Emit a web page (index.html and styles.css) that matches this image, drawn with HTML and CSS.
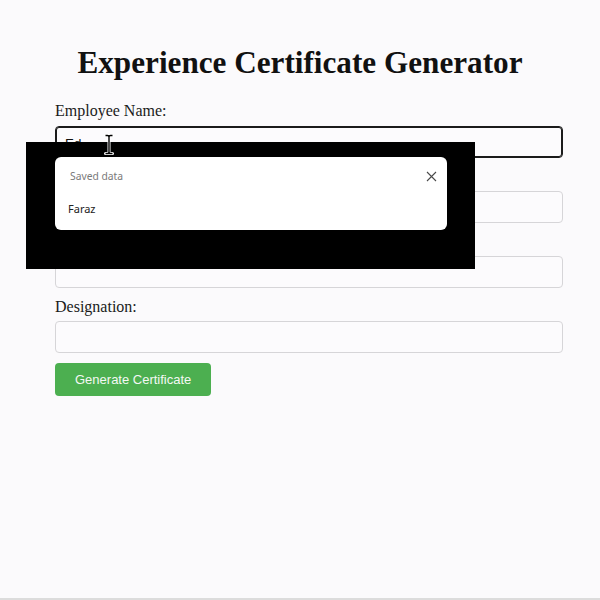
FILE: index.html
```html
<!DOCTYPE html>
<html lang="en">
<head>
<meta charset="utf-8">
<title>Experience Certificate Generator</title>
<link rel="stylesheet" href="styles.css">
</head>
<body>
<div class="page">
  <div class="container">
    <h1 class="title">Experience Certificate Generator</h1>
    <form class="form">
      <label class="label">Employee Name:</label>
      <div class="input input-focused"><span class="value">Ed</span></div>
      <label class="label"></label>
      <div class="input"></div>
      <label class="label"></label>
      <div class="input"></div>
      <label class="label">Designation:</label>
      <div class="input"></div>
      <button type="button" class="btn">Generate Certificate</button>
    </form>
  </div>

  <div class="overlay">
    <div class="popup">
      <div class="popup-head">
        <span class="popup-title">Saved data</span>
        <svg class="close" width="11" height="11" viewBox="0 0 11 11"><path d="M1 1 L10 10 M10 1 L1 10" stroke="#4a4a4a" stroke-width="1.1" fill="none"/></svg>
      </div>
      <div class="popup-item">Faraz</div>
    </div>
  </div>

  <svg class="ibeam" width="10" height="21" viewBox="0 0 10 21">
    <path d="M1.5 1.5 H3.5 Q5 1.5 5 3 Q5 1.5 6.5 1.5 H8.5 M5 3 V18 M1.5 19.5 H3.5 Q5 19.5 5 18 Q5 19.5 6.5 19.5 H8.5" stroke="#fff" stroke-width="3" fill="none" stroke-linecap="round"/>
    <path d="M1.5 1.5 H3.5 Q5 1.5 5 3 Q5 1.5 6.5 1.5 H8.5 M5 3 V18 M1.5 19.5 H3.5 Q5 19.5 5 18 Q5 19.5 6.5 19.5 H8.5" stroke="#000" stroke-width="1.4" fill="none"/>
  </svg>

  <div class="bottom-line"></div>
</div>
</body>
</html>
```

FILE: styles.css
```css
html, body {
  margin: 0;
  padding: 0;
  background: #fbfafc;
}

.page {
  position: relative;
  width: 600px;
  height: 600px;
  overflow: hidden;
  font-family: "Liberation Serif", "Times New Roman", serif;
  color: #1a1a1a;
}

.container {
  width: 490px;
  margin: 0 auto;
  padding-top: 20px;
}

.title {
  margin: 25px 0 21px;
  font-size: 31.2px;
  font-weight: bold;
  text-align: center;
  color: #111;
  line-height: 36px;
}

.form {
  display: flex;
  flex-direction: column;
  align-items: flex-start;
}

.label {
  display: block;
  height: 18px;
  font-size: 16px;
  line-height: 18px;
  margin-bottom: 5px;
}

.input {
  width: 100%;
  box-sizing: content-box;
  padding: 8px;
  height: 14px;
  border: 1px solid #d6d5d8;
  border-radius: 4px;
  background: #fcfbfd;
  margin-bottom: 10px;
  font-family: "Liberation Sans", Arial, sans-serif;
  font-size: 13.33px;
  line-height: 14px;
  color: #111;
}

.input-focused {
  border-color: #1b1b1b;
  box-shadow: inset 0 0 0 1px #1b1b1b;
  height: 12px;
  margin-top: 1px;
  padding: 10px 8px 8px;
}

.value {
  display: block;
  padding-left: 1px;
}

.btn {
  padding: 9px 20px;
  border: none;
  border-radius: 4px;
  background: #4caf50;
  color: #f4f8f4;
  font-family: "Liberation Sans", Arial, sans-serif;
  font-size: 13px;
  line-height: 15px;
  cursor: pointer;
}

.overlay {
  position: absolute;
  left: 26px;
  top: 142px;
  width: 449px;
  height: 127px;
  background: #000;
  box-sizing: border-box;
  padding: 15px 0 0 29px;
}

.popup {
  width: 392px;
  height: 73px;
  background: #fff;
  border-radius: 6px;
  box-sizing: border-box;
  padding: 11px 10px 0 13px;
  font-family: "Noto Sans", "Open Sans", sans-serif;
}

.popup-head {
  display: flex;
  justify-content: space-between;
  align-items: center;
  height: 16px;
  padding-left: 2px;
}

.popup-title {
  font-size: 10.3px;
  color: #7a7a7a;
}

.close {
  display: block;
}

.popup-item {
  margin-top: 17px;
  font-size: 11px;
  color: #222;
}

.ibeam {
  position: absolute;
  left: 104px;
  top: 134px;
}

.bottom-line {
  position: absolute;
  left: 0;
  right: 0;
  bottom: 0;
  height: 2px;
  background: #dcdcdc;
}
```
